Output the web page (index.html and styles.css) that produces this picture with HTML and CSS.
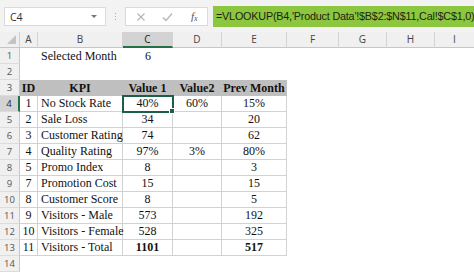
FILE: index.html
```html
<!DOCTYPE html>
<html>
<head>
<meta charset="utf-8">
<link rel="stylesheet" href="styles.css">
</head>
<body>
<div class="fbar">
  <div class="namebox"><span class="ref">C4</span><span class="dd"></span></div>
  <div class="dots"><i></i><i></i><i></i></div>
  <div class="fxbox">
    <svg class="ic" width="10" height="10" viewBox="0 0 10 10"><path d="M1.5 1.5 L8.5 8.5 M8.5 1.5 L1.5 8.5" stroke="#b5b5b5" stroke-width="1.2" fill="none"/></svg>
    <svg class="ic" width="11" height="10" viewBox="0 0 11 10"><path d="M1 5.5 L4 8.5 L10 1.5" stroke="#b5b5b5" stroke-width="1.2" fill="none"/></svg>
    <span class="fx">f<sub>x</sub></span>
  </div>
  <div class="formula">=VLOOKUP(B4,'Product Data'!$B$2:$N$11,Cal!$C$1,0)</div>
</div>
<div class="sheet">
  <div class="corner"><span class="tri"></span></div>
  <div class="ch">A</div><div class="ch">B</div><div class="ch sel">C</div><div class="ch">D</div><div class="ch">E</div><div class="ch">F</div><div class="ch">G</div><div class="ch">H</div><div class="ch last">I</div>

  <div class="rh">1</div><div class="e"></div><div class="e l">Selected Month</div><div class="e m">6</div><div class="e s6"></div>
  <div class="rh">2</div><div class="e s9"></div>

  <div class="rh">3</div><div class="t h">ID</div><div class="t h">KPI</div><div class="t h">Value 1</div><div class="t h">Value2</div><div class="t h">Prev Month</div><div class="e s4"></div>

  <div class="rh rsel">4</div><div class="t m">1</div><div class="t l">No Stock Rate</div><div class="t m cur">40%<span class="handle"></span></div><div class="t m">60%</div><div class="t m">15%</div><div class="e s4"></div>
  <div class="rh">5</div><div class="t m">2</div><div class="t l">Sale Loss</div><div class="t m">34</div><div class="t m"></div><div class="t m">20</div><div class="e s4"></div>
  <div class="rh">6</div><div class="t m">3</div><div class="t l">Customer Rating</div><div class="t m">74</div><div class="t m"></div><div class="t m">62</div><div class="e s4"></div>
  <div class="rh">7</div><div class="t m">4</div><div class="t l">Quality Rating</div><div class="t m">97%</div><div class="t m">3%</div><div class="t m">80%</div><div class="e s4"></div>
  <div class="rh">8</div><div class="t m">5</div><div class="t l">Promo Index</div><div class="t m">8</div><div class="t m"></div><div class="t m">3</div><div class="e s4"></div>
  <div class="rh">9</div><div class="t m">7</div><div class="t l">Promotion Cost</div><div class="t m">15</div><div class="t m"></div><div class="t m">15</div><div class="e s4"></div>
  <div class="rh">10</div><div class="t m">8</div><div class="t l">Customer Score</div><div class="t m">8</div><div class="t m"></div><div class="t m">5</div><div class="e s4"></div>
  <div class="rh">11</div><div class="t m">9</div><div class="t l">Visitors - Male</div><div class="t m">573</div><div class="t m"></div><div class="t m">192</div><div class="e s4"></div>
  <div class="rh">12</div><div class="t m">10</div><div class="t l">Visitors - Female</div><div class="t m">528</div><div class="t m"></div><div class="t m">325</div><div class="e s4"></div>
  <div class="rh">13</div><div class="t m">11</div><div class="t l">Visitors - Total</div><div class="t m b">1101</div><div class="t m"></div><div class="t m b">517</div><div class="e s4"></div>
  <div class="rh">14</div><div class="e s9"></div>
</div>
</body>
</html>
```
FILE: styles.css
```css
html, body {
  margin: 0;
  padding: 0;
}
body {
  width: 474px;
  height: 274px;
  overflow: hidden;
  background: #ffffff;
  font-family: "Liberation Serif", "Times New Roman", serif;
  color: #111;
}
.fbar {
  height: 32px;
  background: #f3f3f3;
  display: flex;
  align-items: flex-start;
  padding-top: 7px;
  box-sizing: border-box;
}
.namebox {
  margin-left: 4px;
  width: 102px;
  height: 19px;
  box-sizing: border-box;
  background: #fff;
  border: 1px solid #dadada;
  display: flex;
  align-items: center;
  justify-content: space-between;
  padding: 0 8px 0 5px;
  font-family: "Open Sans", "Noto Sans", sans-serif;
  font-size: 10.5px;
  color: #333;
}
.dd {
  width: 0;
  height: 0;
  border-left: 3px solid transparent;
  border-right: 3px solid transparent;
  border-top: 3px solid #777;
}
.dots {
  width: 19px;
  height: 19px;
  display: flex;
  flex-direction: column;
  align-items: center;
  justify-content: center;
  gap: 2px;
}
.dots i {
  display: block;
  width: 1px;
  height: 1px;
  background: #aaa;
}
.fxbox {
  width: 83px;
  height: 19px;
  box-sizing: border-box;
  background: #fff;
  border: 1px solid #dadada;
  display: flex;
  align-items: center;
  padding-left: 10px;
  gap: 16px;
}
.fx {
  font-family: "Liberation Serif", serif;
  font-style: italic;
  font-size: 11px;
  color: #555;
  margin-left: 2px;
}
.fx sub {
  font-size: 8px;
  vertical-align: -1px;
}
.formula {
  margin-left: 5px;
  margin-top: -1px;
  flex: 1;
  height: 21px;
  background: #8dc63f;
  font-family: "Liberation Sans", Arial, sans-serif;
  font-size: 10.8px;
  letter-spacing: -0.2px;
  line-height: 21px;
  padding-left: 3px;
  color: #1c2410;
  white-space: nowrap;
  overflow: hidden;
}
.sheet {
  display: grid;
  grid-template-columns: 20px 18px 85px 50px 49px 65px 52px 48px 48px 1fr;
  grid-template-rows: 16px;
  grid-auto-rows: 16px;
}
.corner {
  background: #f0f0f0;
  border-right: 1px solid #d0d0d0;
  border-bottom: 1px solid #c6c6c6;
  box-sizing: border-box;
  position: relative;
}
.tri {
  position: absolute;
  right: 3px;
  bottom: 3px;
  width: 0;
  height: 0;
  border-left: 9px solid transparent;
  border-bottom: 9px solid #c3c3c3;
}
.ch {
  background: #f0f0f0;
  border-right: 1px solid #d4d4d4;
  border-bottom: 1px solid #c6c6c6;
  box-sizing: border-box;
  text-align: center;
  font-family: "Open Sans", "Noto Sans", sans-serif;
  font-size: 10px;
  line-height: 15px;
  color: #444;
}
.ch.sel {
  background: #d3d3d3;
  border-bottom: 2px solid #217346;
  color: #222;
}
.ch.last {
  border-right: none;
}
.rh {
  background: #f0f0f0;
  border-right: 1px solid #c6c6c6;
  border-bottom: 1px solid #dcdcdc;
  box-sizing: border-box;
  text-align: center;
  font-family: "Open Sans", "Noto Sans", sans-serif;
  font-size: 9.5px;
  line-height: 15px;
  color: #555;
}
.rh.rsel {
  background: #d3d3d3;
  border-right: 2px solid #217346;
  color: #222;
}
.e {
  background: #fff;
}
.s4 { grid-column: span 4; }
.s6 { grid-column: span 6; }
.s9 { grid-column: span 9; }
.l {
  text-align: left;
  padding-left: 3px;
  font-size: 12px;
  line-height: 16px;
  white-space: nowrap;
}
.m {
  text-align: center;
  font-size: 12px;
  line-height: 16px;
}
.t {
  box-sizing: border-box;
  border-right: 1px solid #d2d2d2;
  border-bottom: 1px solid #d2d2d2;
  font-size: 12px;
  line-height: 15px;
  white-space: nowrap;
  overflow: visible;
}
.t.h {
  background: #bfbfbf;
  border-color: #bfbfbf;
  font-weight: bold;
  text-align: center;
  line-height: 16px;
}
.b {
  font-weight: bold;
}
.cur {
  position: relative;
  outline: 2px solid #1f5e46;
  outline-offset: -1px;
  z-index: 2;
}
.handle {
  position: absolute;
  right: -3px;
  bottom: -3px;
  width: 4px;
  height: 4px;
  background: #1f5e46;
  border: 1px solid #fff;
}
```
